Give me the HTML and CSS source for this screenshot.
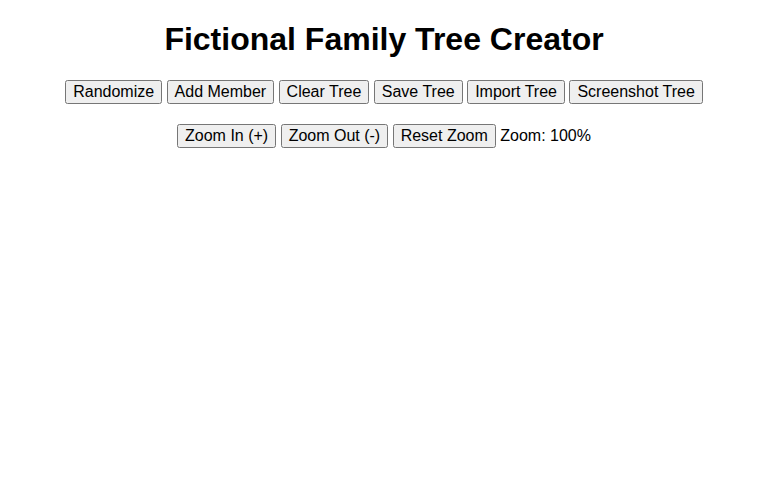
FILE: index.html
```html
<!DOCTYPE html>
<html>
<head>
<meta charset="utf-8">
<link rel="stylesheet" href="styles.css">
</head>
<body>
<h1 class="title">Fictional Family Tree Creator</h1>
<div class="controls">
<button class="btn">Randomize</button>
<button class="btn">Add Member</button>
<button class="btn">Clear Tree</button>
<button class="btn">Save Tree</button>
<button class="btn">Import Tree</button>
<button class="btn">Screenshot Tree</button>
</div>
<div class="controls zoom">
<button class="btn">Zoom In (+)</button>
<button class="btn">Zoom Out (-)</button>
<button class="btn">Reset Zoom</button>
<span class="zoom-label">Zoom: 100%</span>
</div>
</body>
</html>
```
FILE: styles.css
```css
body {
  margin: 0;
  font-family: "Liberation Sans", Arial, sans-serif;
  background: #fff;
  color: #000;
}
.title {
  font-size: 32px;
  font-weight: bold;
  text-align: center;
  margin: 21px 0 22px;
  line-height: 37px;
}
.controls {
  text-align: center;
  font-size: 16px;
  height: 24px;
  line-height: 24px;
  margin-bottom: 20px;
}
.btn {
  font-family: "Liberation Sans", Arial, sans-serif;
  font-size: 16px;
  padding: 1px 6px;
  margin: 0;
  height: 24px;
  vertical-align: top;
}
.zoom-label {
  font-size: 16px;
}
```
